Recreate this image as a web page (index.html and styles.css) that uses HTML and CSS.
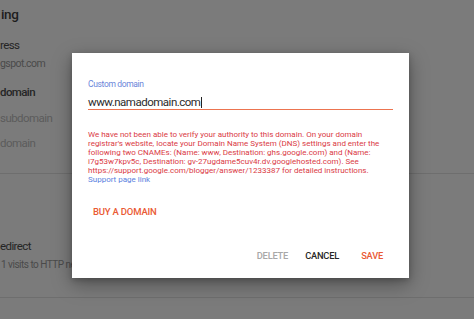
FILE: index.html
```html
<!DOCTYPE html>
<html>
<head>
<meta charset="utf-8">
<link rel="stylesheet" href="styles.css">
</head>
<body>
<div class="page">
  <div class="h1">ing</div>
  <div class="t-dark r1">ress</div>
  <div class="t-sub r2">gspot.com</div>
  <div class="t-dark bold r3">domain</div>
  <div class="t-light r4">subdomain</div>
  <div class="t-light r5">domain</div>
  <div class="rule r6"></div>
  <div class="t-dark r7">edirect</div>
  <div class="t-sub r8">1 visits to HTTP needs a secure</div>
  <div class="rule r9"></div>
</div>

<div class="dialog">
  <div class="label">Custom domain</div>
  <div class="input">www.namadomain.com<span class="caret"></span></div>
  <div class="error">We have not been able to verify your authority to this domain. On your domain registrar's website, locate your Domain Name System (DNS) settings and enter the following two CNAMEs: (Name: www, Destination: ghs.google.com) and (Name: i7g53w7kpv5c, Destination: gv-27ugdame5cuv4r.dv.googlehosted.com). See https://support.google.com/blogger/answer/1233387 for detailed instructions.<br><span class="link">Support page link</span></div>
  <div class="buy">BUY A DOMAIN</div>
  <div class="actions">
    <span class="btn delete">DELETE</span>
    <span class="btn cancel">CANCEL</span>
    <span class="btn save">SAVE</span>
  </div>
</div>
</body>
</html>
```

FILE: styles.css
```css
html, body {
  margin: 0;
  padding: 0;
}
body {
  width: 474px;
  height: 319px;
  overflow: hidden;
  background: #7b7b7b;
  font-family: Roboto, "Liberation Sans", sans-serif;
  position: relative;
}
.page {
  white-space: nowrap;
}
.h1 {
  font-size: 13.5px;
  font-weight: 500;
  line-height: 28px;
  color: #1e1e1e;
  letter-spacing: -0.4px;
  padding-left: 1px;
}
.t-dark {
  font-size: 11.5px;
  line-height: 18px;
  color: #252525;
  letter-spacing: -0.6px;
}
.bold { font-weight: 500; }
.t-sub {
  font-size: 10.5px;
  line-height: 16px;
  color: #4a4a4a;
  letter-spacing: -0.55px;
}
.t-light {
  font-size: 11.5px;
  line-height: 18px;
  color: #5c5c5c;
  letter-spacing: -0.55px;
}
.rule {
  height: 1px;
  background: #6e6e6e;
}
.r1 { margin-top: 8px; }
.r2 { margin-top: 2px; }
.r3 { margin-top: 11px; }
.r4 { margin-top: 8px; }
.r5 { margin-top: 7px; }
.r6 { margin-top: 21px; }
.r7 { margin-top: 63px; }
.r8 { margin-top: 2px; padding-left: 1px; font-size: 10px; letter-spacing: -0.5px; }
.r9 { margin-top: 24px; }

.dialog {
  position: absolute;
  left: 72px;
  top: 53px;
  width: 337px;
  height: 225px;
  box-sizing: border-box;
  background: #fff;
  box-shadow: 0 6px 18px rgba(0,0,0,0.35), 0 2px 6px rgba(0,0,0,0.2);
  padding: 26px 16px 0;
  display: flex;
  flex-direction: column;
}
.label {
  font-size: 8.5px;
  line-height: 10px;
  color: #6a84d9;
  letter-spacing: -0.35px;
}
.input {
  margin-top: 6px;
  font-size: 11.5px;
  line-height: 14px;
  color: #2b2b2b;
  letter-spacing: -0.5px;
  border-bottom: 1.5px solid #ec7450;
  display: flex;
  align-items: center;
}
.caret {
  display: inline-block;
  width: 1px;
  height: 11px;
  background: #222;
  margin-left: 1px;
}
.error {
  margin-top: 20px;
  font-size: 8px;
  line-height: 9.1px;
  color: #da3a45;
}
.link {
  color: #5b7fe0;
}
.buy {
  margin-top: 22px;
  padding-left: 5px;
  font-size: 9.5px;
  line-height: 10px;
  font-weight: 500;
  color: #ea5a34;
  letter-spacing: -0.2px;
}
.actions {
  margin-top: auto;
  margin-bottom: 17px;
  display: flex;
  justify-content: flex-end;
  align-items: center;
  padding-right: 10px;
  font-size: 9.3px;
  line-height: 10px;
  font-weight: 500;
  letter-spacing: -0.2px;
}
.btn { display: block; }
.delete { color: #a8a8a8; }
.cancel { color: #262626; margin-left: 17px; }
.save { color: #ea5a34; margin-left: 22px; }
```
